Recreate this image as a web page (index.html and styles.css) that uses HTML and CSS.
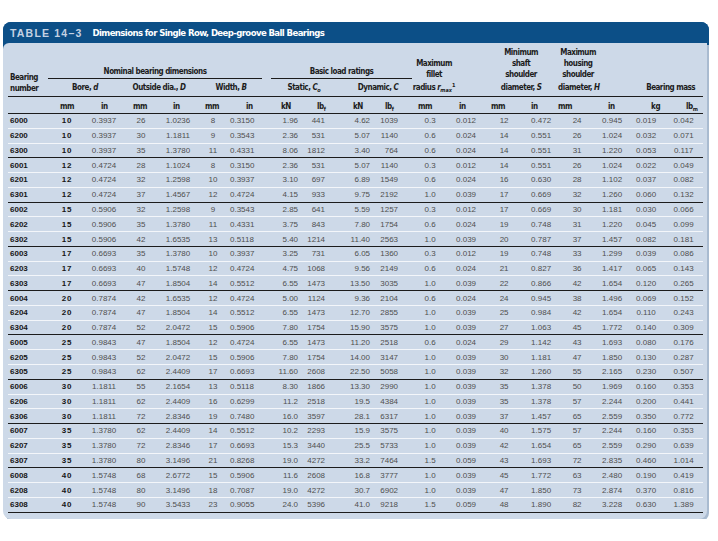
FILE: index.html
```html
<!DOCTYPE html>
<html lang="en">
<head>
<meta charset="utf-8">
<title>Table 14-3 Dimensions for Single Row, Deep-groove Ball Bearings</title>
<link rel="stylesheet" href="styles.css">
</head>
<body>
<div class="sheet">
  <div class="title-bar">
    <span class="tnum">TABLE 14–3</span>
    <span class="ttext">Dimensions for Single Row, Deep-groove Ball Bearings</span>
  </div>
  <div class="panel">
    <table class="bt">
      <colgroup>
        <col class="w40"><col class="w38"><col class="w36"><col class="w38"><col class="w36"><col class="w34"><col class="w36">
        <col class="w36"><col class="w31"><col class="w39"><col class="w40">
        <col class="w36"><col class="w36"><col class="w40"><col class="w34"><col class="w38"><col class="w32"><col class="w36"><col class="w39">
      </colgroup>
      <thead>
        <tr class="ra">
          <th rowspan="2" class="bn">Bearing<br>number</th>
          <th colspan="6" class="grp grp-nom"><div>Nominal bearing dimensions</div></th>
          <th colspan="4" class="grp grp-load"><div>Basic load ratings</div></th>
          <th colspan="2" rowspan="2" class="tall h-fil">Maximum<br>fillet<span class="last">radius <i>r</i><sub><i>max</i></sub><sup>1</sup></span></th>
          <th colspan="2" rowspan="2" class="tall h-s">Minimum<br>shaft<br>shoulder<span class="last">diameter, <i>S</i></span></th>
          <th colspan="2" rowspan="2" class="tall h-h">Maximum<br>housing<br>shoulder<span class="last">diameter, <i>H</i></span></th>
          <th colspan="2" rowspan="2" class="tall h-m"><span class="last">Bearing mass</span></th>
        </tr>
        <tr class="rb">
          <th colspan="2" class="h-bore">Bore, <i>d</i></th>
          <th colspan="2">Outside dia., <i>D</i></th>
          <th colspan="2">Width, <i>B</i></th>
          <th colspan="2" class="h-st">Static, <i>C</i><sub><i>o</i></sub></th>
          <th colspan="2" class="h-dy">Dynamic, <i>C</i></th>
        </tr>
        <tr class="ru">
          <th></th>
          <th>mm</th><th>in</th><th>mm</th><th>in</th><th>mm</th><th>in</th>
          <th>kN</th><th>lb<sub>f</sub></th><th>kN</th><th>lb<sub>f</sub></th>
          <th>mm</th><th>in</th><th>mm</th><th>in</th><th>mm</th><th>in</th>
          <th>kg</th><th>lb<sub>m</sub></th>
        </tr>
      </thead>
      <tbody>
        <tr><td>6000</td><td>10</td><td>0.3937</td><td>26</td><td>1.0236</td><td>8</td><td>0.3150</td><td>1.96</td><td>441</td><td>4.62</td><td>1039</td><td>0.3</td><td>0.012</td><td>12</td><td>0.472</td><td>24</td><td>0.945</td><td>0.019</td><td>0.042</td></tr>
        <tr><td>6200</td><td>10</td><td>0.3937</td><td>30</td><td>1.1811</td><td>9</td><td>0.3543</td><td>2.36</td><td>531</td><td>5.07</td><td>1140</td><td>0.6</td><td>0.024</td><td>14</td><td>0.551</td><td>26</td><td>1.024</td><td>0.032</td><td>0.071</td></tr>
        <tr class="g"><td>6300</td><td>10</td><td>0.3937</td><td>35</td><td>1.3780</td><td>11</td><td>0.4331</td><td>8.06</td><td>1812</td><td>3.40</td><td>764</td><td>0.6</td><td>0.024</td><td>14</td><td>0.551</td><td>31</td><td>1.220</td><td>0.053</td><td>0.117</td></tr>
        <tr><td>6001</td><td>12</td><td>0.4724</td><td>28</td><td>1.1024</td><td>8</td><td>0.3150</td><td>2.36</td><td>531</td><td>5.07</td><td>1140</td><td>0.3</td><td>0.012</td><td>14</td><td>0.551</td><td>26</td><td>1.024</td><td>0.022</td><td>0.049</td></tr>
        <tr><td>6201</td><td>12</td><td>0.4724</td><td>32</td><td>1.2598</td><td>10</td><td>0.3937</td><td>3.10</td><td>697</td><td>6.89</td><td>1549</td><td>0.6</td><td>0.024</td><td>16</td><td>0.630</td><td>28</td><td>1.102</td><td>0.037</td><td>0.082</td></tr>
        <tr class="g"><td>6301</td><td>12</td><td>0.4724</td><td>37</td><td>1.4567</td><td>12</td><td>0.4724</td><td>4.15</td><td>933</td><td>9.75</td><td>2192</td><td>1.0</td><td>0.039</td><td>17</td><td>0.669</td><td>32</td><td>1.260</td><td>0.060</td><td>0.132</td></tr>
        <tr><td>6002</td><td>15</td><td>0.5906</td><td>32</td><td>1.2598</td><td>9</td><td>0.3543</td><td>2.85</td><td>641</td><td>5.59</td><td>1257</td><td>0.3</td><td>0.012</td><td>17</td><td>0.669</td><td>30</td><td>1.181</td><td>0.030</td><td>0.066</td></tr>
        <tr><td>6202</td><td>15</td><td>0.5906</td><td>35</td><td>1.3780</td><td>11</td><td>0.4331</td><td>3.75</td><td>843</td><td>7.80</td><td>1754</td><td>0.6</td><td>0.024</td><td>19</td><td>0.748</td><td>31</td><td>1.220</td><td>0.045</td><td>0.099</td></tr>
        <tr class="g"><td>6302</td><td>15</td><td>0.5906</td><td>42</td><td>1.6535</td><td>13</td><td>0.5118</td><td>5.40</td><td>1214</td><td>11.40</td><td>2563</td><td>1.0</td><td>0.039</td><td>20</td><td>0.787</td><td>37</td><td>1.457</td><td>0.082</td><td>0.181</td></tr>
        <tr><td>6003</td><td>17</td><td>0.6693</td><td>35</td><td>1.3780</td><td>10</td><td>0.3937</td><td>3.25</td><td>731</td><td>6.05</td><td>1360</td><td>0.3</td><td>0.012</td><td>19</td><td>0.748</td><td>33</td><td>1.299</td><td>0.039</td><td>0.086</td></tr>
        <tr><td>6203</td><td>17</td><td>0.6693</td><td>40</td><td>1.5748</td><td>12</td><td>0.4724</td><td>4.75</td><td>1068</td><td>9.56</td><td>2149</td><td>0.6</td><td>0.024</td><td>21</td><td>0.827</td><td>36</td><td>1.417</td><td>0.065</td><td>0.143</td></tr>
        <tr class="g"><td>6303</td><td>17</td><td>0.6693</td><td>47</td><td>1.8504</td><td>14</td><td>0.5512</td><td>6.55</td><td>1473</td><td>13.50</td><td>3035</td><td>1.0</td><td>0.039</td><td>22</td><td>0.866</td><td>42</td><td>1.654</td><td>0.120</td><td>0.265</td></tr>
        <tr><td>6004</td><td>20</td><td>0.7874</td><td>42</td><td>1.6535</td><td>12</td><td>0.4724</td><td>5.00</td><td>1124</td><td>9.36</td><td>2104</td><td>0.6</td><td>0.024</td><td>24</td><td>0.945</td><td>38</td><td>1.496</td><td>0.069</td><td>0.152</td></tr>
        <tr><td>6204</td><td>20</td><td>0.7874</td><td>47</td><td>1.8504</td><td>14</td><td>0.5512</td><td>6.55</td><td>1473</td><td>12.70</td><td>2855</td><td>1.0</td><td>0.039</td><td>25</td><td>0.984</td><td>42</td><td>1.654</td><td>0.110</td><td>0.243</td></tr>
        <tr class="g"><td>6304</td><td>20</td><td>0.7874</td><td>52</td><td>2.0472</td><td>15</td><td>0.5906</td><td>7.80</td><td>1754</td><td>15.90</td><td>3575</td><td>1.0</td><td>0.039</td><td>27</td><td>1.063</td><td>45</td><td>1.772</td><td>0.140</td><td>0.309</td></tr>
        <tr><td>6005</td><td>25</td><td>0.9843</td><td>47</td><td>1.8504</td><td>12</td><td>0.4724</td><td>6.55</td><td>1473</td><td>11.20</td><td>2518</td><td>0.6</td><td>0.024</td><td>29</td><td>1.142</td><td>43</td><td>1.693</td><td>0.080</td><td>0.176</td></tr>
        <tr><td>6205</td><td>25</td><td>0.9843</td><td>52</td><td>2.0472</td><td>15</td><td>0.5906</td><td>7.80</td><td>1754</td><td>14.00</td><td>3147</td><td>1.0</td><td>0.039</td><td>30</td><td>1.181</td><td>47</td><td>1.850</td><td>0.130</td><td>0.287</td></tr>
        <tr class="g"><td>6305</td><td>25</td><td>0.9843</td><td>62</td><td>2.4409</td><td>17</td><td>0.6693</td><td>11.60</td><td>2608</td><td>22.50</td><td>5058</td><td>1.0</td><td>0.039</td><td>32</td><td>1.260</td><td>55</td><td>2.165</td><td>0.230</td><td>0.507</td></tr>
        <tr><td>6006</td><td>30</td><td>1.1811</td><td>55</td><td>2.1654</td><td>13</td><td>0.5118</td><td>8.30</td><td>1866</td><td>13.30</td><td>2990</td><td>1.0</td><td>0.039</td><td>35</td><td>1.378</td><td>50</td><td>1.969</td><td>0.160</td><td>0.353</td></tr>
        <tr><td>6206</td><td>30</td><td>1.1811</td><td>62</td><td>2.4409</td><td>16</td><td>0.6299</td><td>11.2</td><td>2518</td><td>19.5</td><td>4384</td><td>1.0</td><td>0.039</td><td>35</td><td>1.378</td><td>57</td><td>2.244</td><td>0.200</td><td>0.441</td></tr>
        <tr class="g"><td>6306</td><td>30</td><td>1.1811</td><td>72</td><td>2.8346</td><td>19</td><td>0.7480</td><td>16.0</td><td>3597</td><td>28.1</td><td>6317</td><td>1.0</td><td>0.039</td><td>37</td><td>1.457</td><td>65</td><td>2.559</td><td>0.350</td><td>0.772</td></tr>
        <tr><td>6007</td><td>35</td><td>1.3780</td><td>62</td><td>2.4409</td><td>14</td><td>0.5512</td><td>10.2</td><td>2293</td><td>15.9</td><td>3575</td><td>1.0</td><td>0.039</td><td>40</td><td>1.575</td><td>57</td><td>2.244</td><td>0.160</td><td>0.353</td></tr>
        <tr><td>6207</td><td>35</td><td>1.3780</td><td>72</td><td>2.8346</td><td>17</td><td>0.6693</td><td>15.3</td><td>3440</td><td>25.5</td><td>5733</td><td>1.0</td><td>0.039</td><td>42</td><td>1.654</td><td>65</td><td>2.559</td><td>0.290</td><td>0.639</td></tr>
        <tr class="g"><td>6307</td><td>35</td><td>1.3780</td><td>80</td><td>3.1496</td><td>21</td><td>0.8268</td><td>19.0</td><td>4272</td><td>33.2</td><td>7464</td><td>1.5</td><td>0.059</td><td>43</td><td>1.693</td><td>72</td><td>2.835</td><td>0.460</td><td>1.014</td></tr>
        <tr><td>6008</td><td>40</td><td>1.5748</td><td>68</td><td>2.6772</td><td>15</td><td>0.5906</td><td>11.6</td><td>2608</td><td>16.8</td><td>3777</td><td>1.0</td><td>0.039</td><td>45</td><td>1.772</td><td>63</td><td>2.480</td><td>0.190</td><td>0.419</td></tr>
        <tr><td>6208</td><td>40</td><td>1.5748</td><td>80</td><td>3.1496</td><td>18</td><td>0.7087</td><td>19.0</td><td>4272</td><td>30.7</td><td>6902</td><td>1.0</td><td>0.039</td><td>47</td><td>1.850</td><td>73</td><td>2.874</td><td>0.370</td><td>0.816</td></tr>
        <tr class="g"><td>6308</td><td>40</td><td>1.5748</td><td>90</td><td>3.5433</td><td>23</td><td>0.9055</td><td>24.0</td><td>5396</td><td>41.0</td><td>9218</td><td>1.5</td><td>0.059</td><td>48</td><td>1.890</td><td>82</td><td>3.228</td><td>0.630</td><td>1.389</td></tr>
      </tbody>
    </table>
  </div>
</div>
</body>
</html>
```
FILE: styles.css
```css
* { box-sizing: border-box; }
html, body { margin: 0; padding: 0; background: #ffffff; }
body { font-family: "Liberation Sans", Arial, sans-serif; }

.sheet {
  width: 706px;
  margin: 22px 0 0 3px;
  border-radius: 8px 8px 0 0;
  background: linear-gradient(#0c4f87 0, #0c4f87 40px, transparent 40px);
}
.title-bar {
  height: 21px;
  display: flex;
  align-items: center;
  gap: 10px;
  padding-left: 7px;
  background: #0c4f87;
  border-radius: 8px 8px 0 0;
}
.tnum {
  font-weight: 700;
  font-size: 10.5px;
  letter-spacing: 1.2px;
  color: #c5d2e3;
}
.ttext {
  font-family: "Liberation Sans Narrow", "DejaVu Sans Condensed", "Liberation Sans", sans-serif;
  font-weight: 700;
  font-size: 9.5px;
  letter-spacing: -0.6px;
  color: #ffffff;
}
.panel {
  width: 704px;
  background: #cdd9e8;
  border-radius: 6px 0 8px 8px;
  box-shadow: 2px 2px 0 #a9bbd0;
  padding: 2px 4px 6px 5px;
}

.bt {
  width: 695px;
  table-layout: fixed;
  border-collapse: separate;
  border-spacing: 0;
}
.w31 { width: 31px; } .w32 { width: 32px; } .w34 { width: 34px; } .w36 { width: 36px; }
.w38 { width: 38px; } .w39 { width: 39px; } .w40 { width: 40px; }

.bt th {
  font-family: "Liberation Sans Narrow", "DejaVu Sans Condensed", "Liberation Sans", sans-serif;
  font-weight: 700;
  font-size: 8px;
  letter-spacing: -0.5px;
  line-height: 11px;
  color: #1c1c1c;
  padding: 0;
  white-space: nowrap;
  text-align: center;
}
.bt sub, .bt sup { font-size: 5.5px; line-height: 0; letter-spacing: 0; }
.bt sub { vertical-align: -2px; }
.bt sup { vertical-align: 3px; }

.ra th { height: 34px; vertical-align: bottom; }
.grp div { border-bottom: 1px solid #1c1c1c; padding-bottom: 1px; }
.grp-nom div { margin-right: 4px; }
.grp-load div { margin-left: 5px; }

.rb th { height: 18px; border-bottom: 1px solid #1c1c1c; vertical-align: middle; }
.h-st { padding-left: 9px !important; }
.h-dy { padding-left: 11px !important; }

.bt .tall, .bt .bn { vertical-align: bottom; border-bottom: 1px solid #1c1c1c; padding-bottom: 3.5px; }
.bt .bn { text-align: left; padding-left: 2px; padding-bottom: 2.5px; }
.last { display: block; margin-top: 2px; }
.bt .h-fil { padding-right: 28px; }
.bt .h-h { padding-right: 30px; }
.bt .h-m { padding-left: 10px; }

.ru th { height: 17px; border-bottom: 1px solid #1c1c1c; vertical-align: top; padding-top: 4px; text-align: left; }
.bt .ru th:nth-child(2) { padding-left: 12px; }
.bt .ru th:nth-child(3) { padding-left: 15px; }
.bt .ru th:nth-child(4) { padding-left: 11px; }
.bt .ru th:nth-child(5) { padding-left: 13px; }
.bt .ru th:nth-child(6) { padding-left: 9px; }
.bt .ru th:nth-child(7) { padding-left: 16px; }
.bt .ru th:nth-child(8) { padding-left: 15px; }
.bt .ru th:nth-child(9) { padding-left: 15px; }
.bt .ru th:nth-child(10) { padding-left: 20px; }
.bt .ru th:nth-child(11) { padding-left: 13px; }
.bt .ru th:nth-child(12) { padding-left: 6px; }
.bt .ru th:nth-child(13) { padding-left: 11px; }
.bt .ru th:nth-child(14) { padding-left: 7px; }
.bt .ru th:nth-child(15) { padding-left: 7px; }
.bt .ru th:nth-child(16) { padding-left: 0; }
.bt .ru th:nth-child(17) { padding-left: 12px; }
.bt .ru th:nth-child(18) { padding-left: 23px; }
.bt .ru th:nth-child(19) { padding-left: 22px; }

.bt td {
  font-size: 8px;
  line-height: 13px;
  height: 14.78px;
  padding: 0;
  color: #4f4f4f;
  text-align: center;
  white-space: nowrap;
  border-bottom: 1px solid #f3f6fa;
}
.bt tr.g td { border-bottom-color: #1c1c1c; }
.bt td:nth-child(1) { text-align: left; padding-left: 2px; font-weight: 700; color: #161616; }
.bt td:nth-child(2) { font-weight: 700; color: #161616; letter-spacing: 0.8px; }
.bt td:nth-child(7) { text-align: left; }
.bt td:nth-child(8) { text-align: right; padding-right: 4px; }
.bt td:nth-child(9) { text-align: right; padding-right: 8px; }
.bt td:nth-child(10) { text-align: right; padding-right: 2px; }
.bt td:nth-child(11) { text-align: right; padding-right: 14px; }
```
